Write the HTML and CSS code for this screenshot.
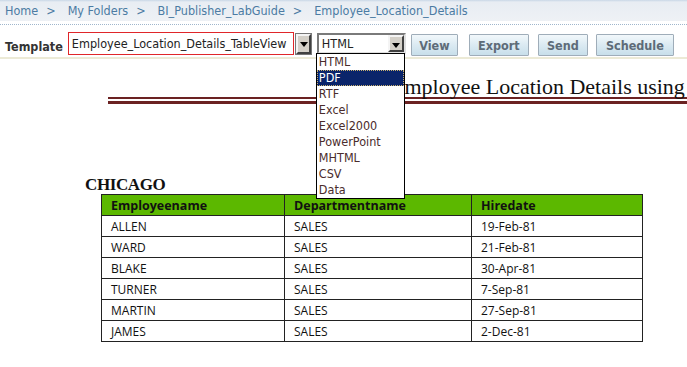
FILE: index.html
```html
<!doctype html>
<html lang="en">
<head>
  <meta charset="utf-8">
  <title>Employee_Location_Details</title>
  <link rel="stylesheet" href="styles.css">
</head>
<body>
  <div class="crumbs">
    <a>Home</a><span class="sep">&gt;</span><a>My Folders</a><span class="sep">&gt;</span><a>BI_Publisher_LabGuide</a><span class="sep">&gt;</span><a>Employee_Location_Details</a>
  </div>
  <div class="dots"></div>

  <div class="toolbar">
    <span class="label">Template</span>
    <div class="tpl-select">Employee_Location_Details_TableView</div>
    <span class="arrow-btn"></span>
    <div class="fmt-select">
      <span class="fmt-value">HTML</span>
      <span class="arrow-btn"></span>
      <ul class="menu">
        <li>HTML</li>
        <li class="sel">PDF</li>
        <li>RTF</li>
        <li>Excel</li>
        <li>Excel2000</li>
        <li>PowerPoint</li>
        <li>MHTML</li>
        <li>CSV</li>
        <li>Data</li>
      </ul>
    </div>
    <button class="btn btn-view">View</button>
    <button class="btn btn-export">Export</button>
    <button class="btn btn-send">Send</button>
    <button class="btn btn-schedule">Schedule</button>
  </div>

  <div class="report">
    <div class="title">Employee Location Details using Table View</div>
    <div class="rule"></div>
    <h2 class="city">CHICAGO</h2>
    <table class="grid">
      <thead>
        <tr><th>Employeename</th><th>Departmentname</th><th>Hiredate</th></tr>
      </thead>
      <tbody>
        <tr><td>ALLEN</td><td>SALES</td><td>19-Feb-81</td></tr>
        <tr><td>WARD</td><td>SALES</td><td>21-Feb-81</td></tr>
        <tr><td>BLAKE</td><td>SALES</td><td>30-Apr-81</td></tr>
        <tr><td>TURNER</td><td>SALES</td><td>7-Sep-81</td></tr>
        <tr><td>MARTIN</td><td>SALES</td><td>27-Sep-81</td></tr>
        <tr><td>JAMES</td><td>SALES</td><td>2-Dec-81</td></tr>
      </tbody>
    </table>
  </div>
</body>
</html>
```

FILE: styles.css
```css
*{box-sizing:border-box}
html,body{margin:0;background:#fff;overflow:hidden}
body{font-family:"DejaVu Sans Condensed","DejaVu Sans",Tahoma,sans-serif;color:#222}

/* breadcrumb bar */
.crumbs{height:21px;padding:4px 0 0 5px;background:linear-gradient(180deg,#c9d7e6 0,#e8edf3 2px,#eef1f5 100%);color:#4b7ba3;font-size:12.5px;line-height:14px;white-space:nowrap}
.crumbs a{color:#4b7ba3}
.crumbs .sep{margin:0 12px 0 8px}
.dots{height:6px;margin-top:3px;border-top:1px dotted #9fb6cc}

/* toolbar */
.toolbar{display:flex;align-items:center;height:29px;padding-left:5px;border-bottom:2px solid #ecead6;position:relative}
.label{font-weight:bold;font-size:12.5px;color:#333;margin-right:5px;margin-top:6px}
.tpl-select{width:226px;height:23px;border:1px solid #e0262a;padding:3px 0 0 3px;font-size:12.5px;color:#222;white-space:nowrap;overflow:hidden}
.arrow-btn{display:inline-block;width:15px;height:20px;background:#d4d0c8;border:2px solid;border-color:#f4f4f4 #404040 #404040 #f4f4f4;position:relative}
.arrow-btn:after{content:"";position:absolute;left:2px;top:6px;border:4px solid transparent;border-top:5px solid #000;border-bottom:0}
.tpl-select + .arrow-btn{margin-left:2px;outline:1px solid #777}

.fmt-select{position:relative;display:flex;width:89px;height:21px;margin-left:6px;border:2px solid;border-color:#7a7a7a #e0e0e0 #e0e0e0 #7a7a7a;background:#fff}
.fmt-value{flex:1;font-size:12.5px;padding:1px 0 0 3px;color:#222}
.fmt-select .arrow-btn{height:17px;width:16px}
.menu{list-style:none;margin:0;padding:0;position:absolute;left:-3px;top:18px;width:89px;background:#fff;border:1px solid #000;z-index:2}
.menu li{height:16px;line-height:16px;padding-left:2px;font-size:12.5px;color:#4a2c2c}
.menu li.sel{background:#0a246a;color:#fff;outline:1px dotted #c8b070;outline-offset:-1px}

.btn{height:22px;margin-left:9px;margin-top:3px;padding:0;font-family:inherit;font-weight:bold;font-size:12.5px;color:#5d6b78;border:1px solid #9fadb9;border-radius:1px;background:linear-gradient(180deg,#f2f8fb 0,#dbeaf2 50%,#c8dfea 100%)}
.fmt-select + .btn{margin-left:5px}
.btn-view{width:47px}
.btn-export{width:60px;margin-left:11px}
.btn-send{width:50px}
.btn-schedule{width:78px;margin-left:8px}

/* report */
.report{white-space:nowrap}
.title{font-family:"Liberation Serif","Times New Roman",serif;font-size:22px;color:#111;padding:15px 0 0 391px;height:38px}
.rule{margin-left:108px;height:7px;border-top:2px solid #6b2222;border-bottom:3px solid #6b2222}
.city{font-family:"Liberation Serif",serif;font-weight:bold;font-size:17px;letter-spacing:-0.4px;color:#111;margin:72px 0 0 85px;line-height:18px}
.grid{margin-left:101px;border-collapse:collapse;font-family:"Open Sans",sans-serif;font-size:12px;color:#111}
.grid th,.grid td{border:1px solid #222;height:21px;padding:0 9px;text-align:left}
.grid th{background:#5cb800;font-weight:700;font-size:12.5px;height:21px}
.grid th:nth-child(1){width:183px}
.grid th:nth-child(2){width:187px}
.grid th:nth-child(3){width:171px}
```
